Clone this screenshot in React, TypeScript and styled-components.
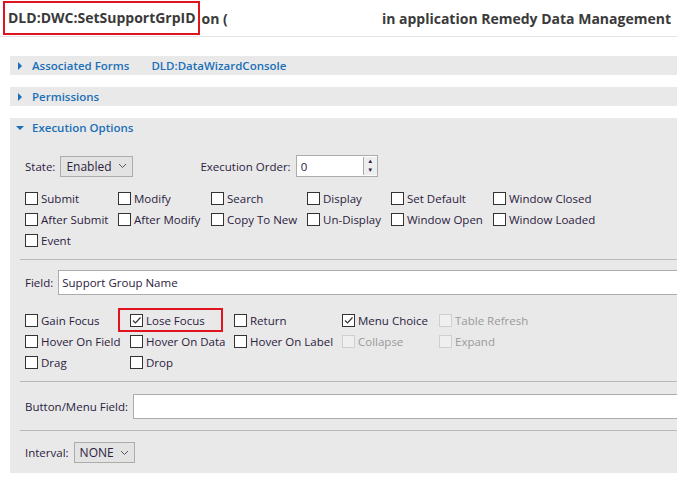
import styled, { createGlobalStyle } from "styled-components"

const Global = createGlobalStyle`
    body { margin: 0; background: #fff; font-family: "Open Sans", "Noto Sans", sans-serif; font-size: 11.5px; color: #2b2140; }
`

const Page = styled.div`
    width: 677px;
    height: 481px;
    overflow: hidden;
`

const TitleBar = styled.div`
    display: flex;
    align-items: center;
    height: 36px;
    border-bottom: 1px solid #e4e4e4;
    font-weight: 700;
    font-size: 14px;
    color: #3a3a3a;
    white-space: nowrap;
`

const TitleName = styled.span`
    border: 2px solid #e0141e;
    padding: 5px 2px 6px 3px;
    margin-left: 3px;
`

const TitleRest = styled.span`
    margin-left: 2px;
`

const TitleApp = styled.span`
    margin-left: auto;
    margin-right: 6px;
`

const Sections = styled.div`
    padding: 19px 0 0 10px;
    display: flex;
    flex-direction: column;
    gap: 12px;
`

const Header = styled.div`
    height: 19px;
    background: #e9e9e9;
    display: flex;
    align-items: center;
    color: #1a6fb8;
    font-weight: 600;
    gap: 6px;
    padding-left: 6px;
`

const Arrow = styled.span<{ open?: boolean }>`
    width: 0;
    height: 0;
    ${({ open }) => open
        ? `border-left: 4px solid transparent; border-right: 4px solid transparent; border-top: 4px solid #1a6fb8; margin-right: 2px;`
        : `border-top: 4px solid transparent; border-bottom: 4px solid transparent; border-left: 4px solid #1a6fb8; margin-right: 4px; margin-left: 2px;`}
`

const HeaderLink = styled.span`
    margin-left: 16px;
`

const Body = styled.div`
    background: #e9e9e9;
    padding: 18px 0 10px 15px;
`

const Row = styled.div<{ m?: string }>`
    display: flex;
    align-items: center;
    gap: 5px;
    margin: ${({ m }) => m || "0"};
`

const Select = styled.div<{ w: number }>`
    width: ${({ w }) => w}px;
    height: 21px;
    box-sizing: border-box;
    border: 1px solid #acacac;
    background: #e3e3e3;
    display: flex;
    align-items: center;
    justify-content: space-between;
    padding: 0 5px;
    font-size: 12px;
`

const Chevron = () => <svg width="9" height="6" viewBox="0 0 9 6"><path d="M1 1l3.5 3.5L8 1" fill="none" stroke="#555" strokeWidth="1" /></svg>

const OrderLabel = styled.span`
    margin-left: 62px;
`

const Spin = styled.div`
    display: flex;
    align-items: center;
    width: 82px;
    height: 22px;
    box-sizing: border-box;
    border: 1px solid #acacac;
    background: #fff;
    padding-left: 4px;
    justify-content: space-between;
`

const SpinBtns = styled.div`
    display: flex;
    flex-direction: column;
    width: 13px;
    height: 18px;
    border-left: 1px solid #acacac;
    background: #eee;
    font-size: 6px;
    line-height: 9px;
    text-align: center;
`

const Grid = styled.div<{ cols: string; top?: number }>`
    display: grid;
    grid-template-columns: ${({ cols }) => cols};
    row-gap: 5px;
    margin-top: ${({ top }) => top ?? 0}px;
    margin-bottom: 11px;
`

const Check = styled.label<{ disabled?: boolean; marked?: boolean }>`
    display: flex;
    align-items: center;
    gap: 3px;
    height: 16px;
    white-space: nowrap;
    color: ${({ disabled }) => disabled ? "#9a9a9a" : "inherit"};
    ${({ marked }) => marked && `outline: 2px solid #e0141e; margin: -2px 0 -2px -10px; height: 20px; padding-left: 10px; width: 101px; box-sizing: border-box;`}
`

const Box = styled.span<{ disabled?: boolean }>`
    width: 13px;
    height: 13px;
    box-sizing: border-box;
    border: 1px solid ${({ disabled }) => disabled ? "#cfcfcf" : "#333"};
    background: ${({ disabled }) => disabled ? "#efefef" : "#fff"};
    display: flex;
    align-items: center;
    justify-content: center;
`

const Tick = () => <svg width="11" height="11" viewBox="0 0 11 11"><path d="M2 5.5l2.5 2.5L9.5 2.5" fill="none" stroke="#333" strokeWidth="1.2" /></svg>

const Divider = styled.div`
    height: 1px;
    background: #b9b9b9;
    margin-left: -5px;
`

const Input = styled.div`
    flex: 1;
    height: 25px;
    box-sizing: border-box;
    border: 1px solid #acacac;
    border-right: none;
    background: #fff;
    display: flex;
    align-items: center;
    padding-left: 3px;
`

const Cb = ({ label, checked, disabled, marked }: { label: string; checked?: boolean; disabled?: boolean; marked?: boolean }) => (
    <Check disabled={disabled} marked={marked}>
        <Box disabled={disabled}>{checked && <Tick />}</Box>
        {label}
    </Check>
)

const Section = styled.div`
    display: flex;
    flex-direction: column;
`

export default function App() {
    return <Page>
        <Global />
        <TitleBar>
            <TitleName>DLD:DWC:SetSupportGrpID</TitleName>
            <TitleRest>on (</TitleRest>
            <TitleApp>in application Remedy Data Management</TitleApp>
        </TitleBar>
        <Sections>
            <Header><Arrow />Associated Forms<HeaderLink>DLD:DataWizardConsole</HeaderLink></Header>
            <Header><Arrow />Permissions</Header>
            <Section>
                <Header><Arrow open />Execution Options</Header>
                <Body>
                    <Row>
                        State:<Select w={73}>Enabled<Chevron /></Select>
                        <OrderLabel>Execution Order:</OrderLabel>
                        <Spin>0<SpinBtns><span>▲</span><span>▼</span></SpinBtns></Spin>
                    </Row>
                    <Grid cols="93px 93px 96px 84px 102px 1fr" top={13}>
                        <Cb label="Submit" /><Cb label="Modify" /><Cb label="Search" /><Cb label="Display" /><Cb label="Set Default" /><Cb label="Window Closed" />
                        <Cb label="After Submit" /><Cb label="After Modify" /><Cb label="Copy To New" /><Cb label="Un-Display" /><Cb label="Window Open" /><Cb label="Window Loaded" />
                        <Cb label="Event" />
                    </Grid>
                    <Divider />
                    <Row m="10px 0 17px">Field:<Input>Support Group Name</Input></Row>
                    <Grid cols="105px 104px 108px 97px 1fr">
                        <Cb label="Gain Focus" /><Cb label="Lose Focus" checked marked /><Cb label="Return" /><Cb label="Menu Choice" checked /><Cb label="Table Refresh" disabled />
                        <Cb label="Hover On Field" /><Cb label="Hover On Data" /><Cb label="Hover On Label" /><Cb label="Collapse" disabled /><Cb label="Expand" disabled />
                        <Cb label="Drag" /><Cb label="Drop" />
                    </Grid>
                    <Divider />
                    <Row m="12px 0 11px">Button/Menu Field:<Input /></Row>
                    <Divider />
                    <Row m="11px 0 0">Interval:<Select w={61}>NONE<Chevron /></Select></Row>
                </Body>
            </Section>
        </Sections>
    </Page>
}
